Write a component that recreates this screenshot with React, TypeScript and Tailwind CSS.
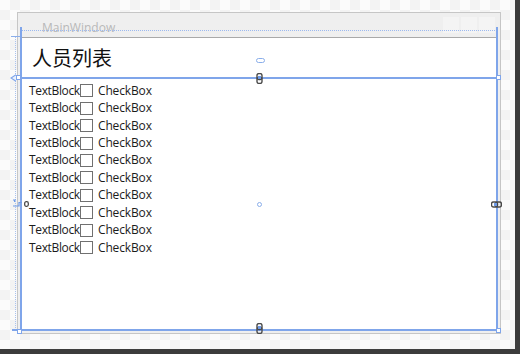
import React from "react";

const rows = Array.from({ length: 10 });

const Link = ({ className }: { className: string }) => (
  <svg className={className} width="7" height="11" viewBox="0 0 7 11">
    <rect x="1" y="0.5" width="5" height="6" rx="2" fill="none" stroke="#4a4a4a" strokeWidth="1.4" />
    <rect x="1" y="4.5" width="5" height="6" rx="2" fill="none" stroke="#4a4a4a" strokeWidth="1.4" />
    <rect x="2" y="3" width="3" height="3" fill="#6f9be6" />
  </svg>
);

const Grip = ({ className }: { className: string }) => (
  <div className={`absolute w-[5px] h-[5px] border border-[#7fa5ea] bg-white ${className}`} />
);

const App = () => {
  return (
    <div className="w-[520px] h-[354px] overflow-hidden bg-[#3c3c3c] font-['Segoe_UI','Open_Sans','Liberation_Sans',sans-serif]">
      <div className="relative w-[515px] h-[349px] bg-[conic-gradient(#f3f3f3_25%,#fbfbfb_0_50%,#f3f3f3_0_75%,#fbfbfb_0)] bg-[length:20px_20px] pt-[12px] pl-[17px]">
        {/* window */}
        <div className="w-[484px] h-[322px] border border-[#c6c6c6] bg-[#efefef] flex flex-col">
          <div className="h-[24px] flex items-start justify-between pl-[24px] pr-[5px] pt-[4px]">
            <span className="text-[12px] text-[#b8b8b8] leading-[16px] mt-[3px]">MainWindow</span>
            <div className="flex gap-[2px]">
              <div className="w-[16px] h-[16px] bg-[#f4f4f4]" />
              <div className="w-[16px] h-[16px] bg-[#f4f4f4]" />
              <div className="w-[16px] h-[16px] bg-[#f4f4f4]" />
            </div>
          </div>
          <div className="mx-[3px] h-[293px] bg-white border-t border-[#a9a9a9] flex flex-col">
            <div className="h-[40px] flex items-center pl-[11px]">
              <span className="text-[20px] text-[#111] font-['Noto_Sans_CJK_SC',sans-serif] leading-none">人员列表</span>
            </div>
            <div className="pt-[4px] pl-[8px] flex flex-col">
              {rows.map((_, i) => (
                <div key={i} className="h-[17.45px] flex items-center text-[12px] text-[#1b1b1b] leading-none">
                  <span className="w-[51px] tracking-[-0.35px]">TextBlock</span>
                  <span className="w-[13px] h-[13px] border border-[#707070] bg-white" />
                  <span className="ml-[5px] tracking-[-0.15px]">CheckBox</span>
                </div>
              ))}
            </div>
          </div>
        </div>

        {/* design adorners */}
        <div className="absolute left-[22px] top-[30px] w-[475px] border-t border-dotted border-[#9cb9ef]" />
        <div className="absolute left-[15px] top-[37px] h-[293px] border-l border-dotted border-[#a9c2f0]" />
        <div className="absolute left-[11px] top-[36px] w-[11px] h-[1px] bg-[#8aaeea]" />
        <div className="absolute left-[20px] top-[27px] w-[2px] h-[306px] bg-[#7fa5ea]" />
        <div className="absolute left-[496px] top-[27px] w-[2px] h-[304px] bg-[#7fa5ea]" />
        <div className="absolute left-[12px] top-[77px] w-[486px] h-[2px] bg-[#7fa5ea]" />
        <div className="absolute left-[12px] top-[329px] w-[486px] h-[2px] bg-[#7fa5ea]" />

        <Grip className="left-[16px] top-[75px]" />
        <Grip className="left-[17px] top-[329px]" />
        <Grip className="left-[496px] top-[328px]" />
        <Grip className="left-[496px] top-[75px]" />

        <svg className="absolute left-[10px] top-[74px]" width="7" height="8" viewBox="0 0 7 8">
          <path d="M6 0.8 L1 4 L6 7.2" fill="#eaf1fd" stroke="#7fa5ea" strokeWidth="1.1" />
        </svg>

        <div className="absolute left-[256px] top-[58px] w-[9px] h-[5px] rounded-full border-[1.5px] border-[#8aaeea]" />
        <div className="absolute left-[257px] top-[202px] w-[5px] h-[5px] rounded-full border border-[#8aaeea]" />

        <Link className="absolute left-[256px] top-[73px]" />
        <Link className="absolute left-[256px] top-[323px]" />
        <Link className="absolute left-[493px] top-[199px] -rotate-90" />

        <div className="absolute left-[12px] top-[199px] flex items-center gap-[1px]">
          <svg width="11" height="9" viewBox="0 0 11 9">
            <path d="M1 1 L4 1 M2.5 1 L2.5 3" stroke="#6f9be6" strokeWidth="1" />
            <path d="M1 7 L7 7 L7 3.5 L10 3.5" stroke="#6f9be6" strokeWidth="1.2" fill="none" />
          </svg>
          <svg width="5" height="6" viewBox="0 0 5 6">
            <rect x="0.7" y="0.7" width="3.6" height="4.6" rx="1.5" fill="none" stroke="#4a4a4a" strokeWidth="1.3" />
          </svg>
        </div>
      </div>
    </div>
  );
};

export default App;
